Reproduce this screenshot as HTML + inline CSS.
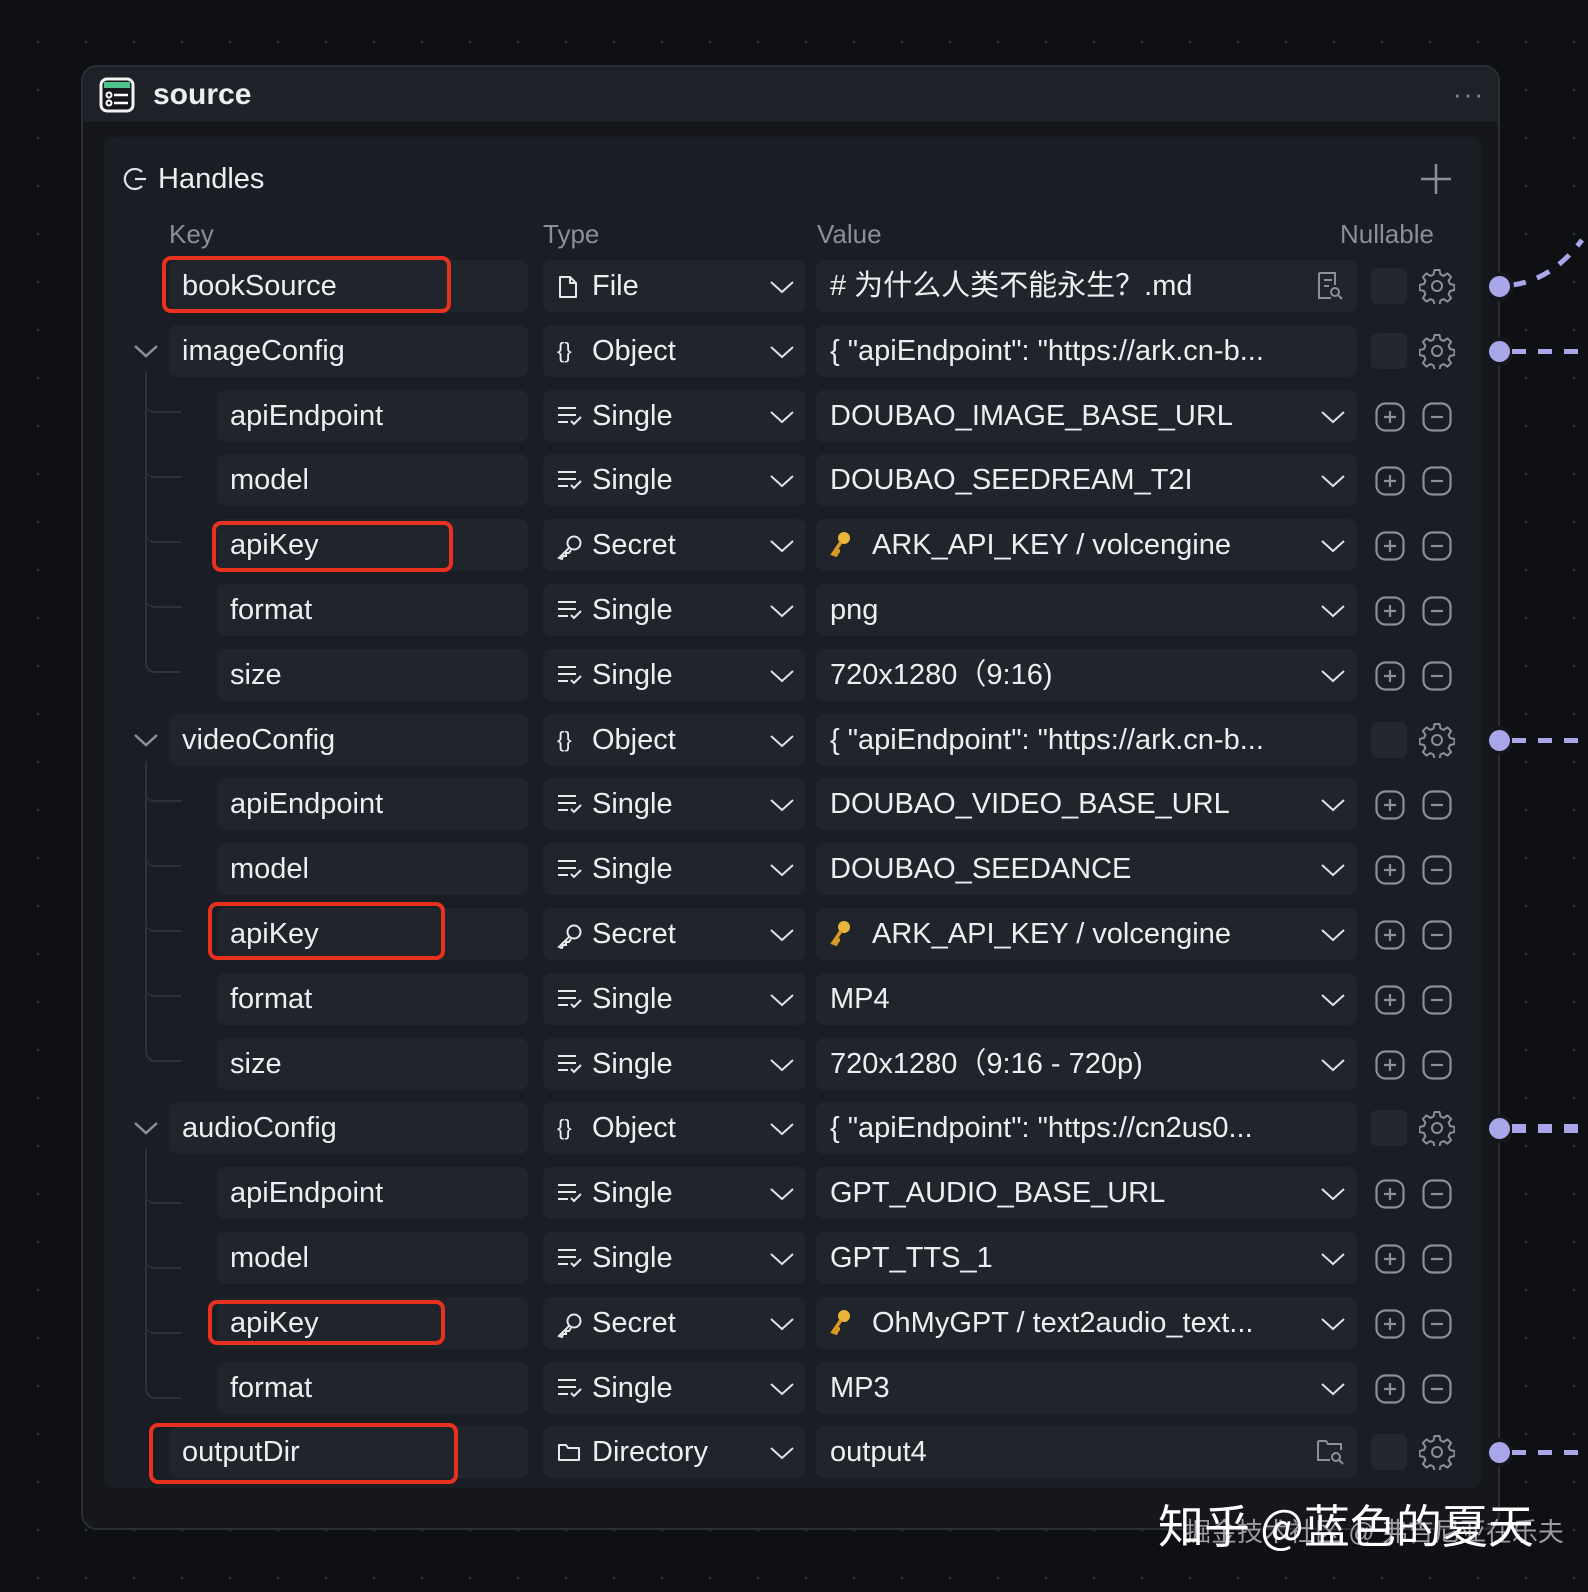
<!DOCTYPE html>
<html><head><meta charset="utf-8"><style>
*{margin:0;padding:0;box-sizing:border-box}
body{width:1588px;height:1592px;overflow:hidden;background:#0e1014;background-image:radial-gradient(circle,#2a2e36 1.2px,transparent 1.5px);background-size:48px 48px;background-position:14px 18px;font-family:"Liberation Sans","Noto Sans CJK SC",sans-serif;color:#eceef2;position:relative}
.node{position:absolute;left:81px;top:65px;width:1419px;height:1465px;background:#15171c;border:2px solid #2b2e35;border-radius:16px;overflow:hidden}
.hdr{position:absolute;left:0;top:0;right:0;height:55px;background:#1e2127}
.panel{position:absolute;left:21px;top:70px;width:1377px;height:1351px;background:#1a1d23;border-radius:10px}
.abs{position:absolute}
.row{position:absolute;left:0;width:1588px;height:52px}
.c{position:absolute;top:0;height:52px;background:#20242b;border-radius:8px;font-size:29px;line-height:52px;white-space:nowrap;overflow:hidden}
.k{padding-left:13px}
.k0{left:169px;width:359px}.k1{left:217px;width:311px}
.t{left:543px;width:263px;padding-left:49px}
.v{left:816px;width:541px;padding-left:14px}
.ti{position:absolute;left:14px;top:15px}
.ch{position:absolute;top:21px}
.t .ch{left:227px}.v .ch{left:505px}
.nb{position:absolute;left:1371px;top:8px;width:36px;height:36px;background:#23272e;border-radius:6px}
.g{position:absolute;left:1419px;top:8px}
.pm{position:absolute;top:12px}
.dot{position:absolute;left:1489px;top:16px;width:21px;height:21px;border-radius:50%;background:#a9a6ea;box-shadow:0 0 0 4px #15171c}
.dash{position:absolute;left:1512px;top:24px;width:76px;height:5px;background:repeating-linear-gradient(90deg,#a9a6ea 0 14px,transparent 14px 26px)}
.red{position:absolute;border:4px solid #e8321f;border-radius:9px}
.br{position:absolute;left:145px;width:36px;height:22px;border-left:2px solid #2e323a;border-bottom:2px solid #2e323a;border-bottom-left-radius:10px}
.arr{position:absolute;left:134px;top:20px}
</style></head><body>
<svg width="0" height="0" style="position:absolute"><defs>
<g id="gear"><path d="M15.5 2h5l1 4.5 3.2 1.4 3.9-2.5 3.5 3.5-2.5 3.9 1.4 3.2 4.5 1v5l-4.5 1-1.4 3.2 2.5 3.9-3.5 3.5-3.9-2.5-3.2 1.4-1 4.5h-5l-1-4.5-3.2-1.4-3.9 2.5-3.5-3.5 2.5-3.9-1.4-3.2-4.5-1v-5l4.5-1 1.4-3.2-2.5-3.9 3.5-3.5 3.9 2.5 3.2-1.4z" fill="none" stroke="#8a8f98" stroke-width="2" stroke-linejoin="round"/><circle cx="18" cy="18" r="5" fill="none" stroke="#8a8f98" stroke-width="2"/></g>
</defs></svg>
<svg class="abs" style="left:1512px;top:235px" width="76" height="60"><path d="M0 50 Q40 45 70 5" stroke="#a9a6ea" stroke-width="5" fill="none" stroke-dasharray="14 12"/></svg>
<div class="node">
<div class="hdr"></div>
<svg class="abs" style="left:16px;top:10px" width="36" height="36" viewBox="0 0 36 36"><rect x="2" y="2" width="32" height="32" rx="6" fill="#15171c" stroke="#f2f2f2" stroke-width="3"/><rect x="5" y="5" width="26" height="6" fill="#4cc38a"/><circle cx="10" cy="18" r="2.5" fill="none" stroke="#fff" stroke-width="2"/><path d="M15 18h14M15 26h14" stroke="#fff" stroke-width="2.5"/><circle cx="10" cy="26" r="2.5" fill="none" stroke="#fff" stroke-width="2"/></svg>
<div class="abs" style="left:70px;top:8px;font-size:30px;font-weight:bold;line-height:40px">source</div>
<div class="abs" style="left:1370px;top:12px;font-size:26px;color:#8a8f98;letter-spacing:2px">···</div>
<div class="panel"></div>
</div>
<svg class="abs" style="left:122px;top:166px" width="26" height="26"><path d="M20 6 A10 10 0 1 0 20 20" stroke="#dfe2e6" stroke-width="2.2" fill="none"/><path d="M13 13h11" stroke="#dfe2e6" stroke-width="2.2"/></svg>
<div class="abs" style="left:158px;top:160px;font-size:29px;line-height:38px">Handles</div>
<svg class="abs" style="left:1421px;top:164px" width="30" height="30"><path d="M15 0v30M0 15h30" stroke="#8a8f98" stroke-width="2.5"/></svg>
<div class="abs" style="top:219px;left:169px;font-size:26px;color:#8a8f98">Key</div>
<div class="abs" style="top:219px;left:543px;font-size:26px;color:#8a8f98">Type</div>
<div class="abs" style="top:219px;left:817px;font-size:26px;color:#8a8f98">Value</div>
<div class="abs" style="top:219px;left:1340px;font-size:26px;color:#8a8f98">Nullable</div>

<div class="br" style="top:372px;height:301px"></div>
<div class="br" style="top:372px;height:236px;border-left:none"></div><div class="br" style="top:372px;height:171px;border-left:none"></div><div class="br" style="top:372px;height:106px;border-left:none"></div><div class="br" style="top:372px;height:41px;border-left:none"></div>
<div class="br" style="top:761px;height:301px"></div>
<div class="br" style="top:761px;height:236px;border-left:none"></div><div class="br" style="top:761px;height:171px;border-left:none"></div><div class="br" style="top:761px;height:106px;border-left:none"></div><div class="br" style="top:761px;height:41px;border-left:none"></div>
<div class="br" style="top:1149px;height:250px"></div>
<div class="br" style="top:1149px;height:185px;border-left:none"></div><div class="br" style="top:1149px;height:120px;border-left:none"></div><div class="br" style="top:1149px;height:55px;border-left:none"></div>

<div class="row" style="top:260px">
<div class="c k k0">bookSource</div>
<div class="c t"><svg class="ti" width="22" height="24"><path d="M3 2h10l6 6v14H3z M13 2v6h6" stroke="#e6e8ec" stroke-width="2" fill="none" stroke-linejoin="round"/></svg>File<svg class="ch" width="24" height="13"><path d="M1 1l11 10 11-10" stroke="#dfe2e6" stroke-width="2" fill="none"/></svg></div>
<div class="c v"># 为什么人类不能永生？.md<svg class="abs" style="left:500px;top:11px" width="28" height="30"><path d="M3 2h16v12M3 2v25h12M8 9h8M8 15h5" stroke="#8a8f98" stroke-width="2" fill="none"/><circle cx="19" cy="21" r="4" stroke="#8a8f98" stroke-width="2" fill="none"/><path d="M22 24l4 4" stroke="#8a8f98" stroke-width="2"/></svg></div>
<div class="nb"></div><svg class="g" width="36" height="36"><use href="#gear"/></svg>
<div class="dot"></div></div>

<div class="row" style="top:325px">
<svg class="arr" width="24" height="13"><path d="M1 1l11 10 11-10" stroke="#8a8f98" stroke-width="2.5" fill="none"/></svg>
<div class="c k k0">imageConfig</div>
<div class="c t"><span class="ti" style="top:0;font-size:22px;line-height:52px">{}</span>Object<svg class="ch" width="24" height="13"><path d="M1 1l11 10 11-10" stroke="#dfe2e6" stroke-width="2" fill="none"/></svg></div>
<div class="c v">{ "apiEndpoint": "https://ark.cn-b...</div>
<div class="nb"></div><svg class="g" width="36" height="36"><use href="#gear"/></svg>
<div class="dot"></div><div class="dash"></div></div>

<div class="row" style="top:390px"><div class="c k k1">apiEndpoint</div><div class="c t"><svg class="ti" width="26" height="22"><path d="M1 3h18M1 10h18M1 17h10M14 16l3 3 7-7" stroke="#e6e8ec" stroke-width="2" fill="none"/></svg>Single<svg class="ch" width="24" height="13"><path d="M1 1l11 10 11-10" stroke="#dfe2e6" stroke-width="2" fill="none"/></svg></div><div class="c v">DOUBAO_IMAGE_BASE_URL<svg class="ch" width="24" height="13"><path d="M1 1l11 10 11-10" stroke="#dfe2e6" stroke-width="2" fill="none"/></svg></div><svg class="pm" style="left:1375px" width="30" height="30"><rect x="1.5" y="1.5" width="27" height="27" rx="9" fill="none" stroke="#8a8f98" stroke-width="2.2"/><path d="M15 9v12M9 15h12" stroke="#8a8f98" stroke-width="2.2"/></svg><svg class="pm" style="left:1422px" width="30" height="30"><rect x="1.5" y="1.5" width="27" height="27" rx="9" fill="none" stroke="#8a8f98" stroke-width="2.2"/><path d="M9 15h12" stroke="#8a8f98" stroke-width="2.2"/></svg></div>

<div class="row" style="top:454px"><div class="c k k1">model</div><div class="c t"><svg class="ti" width="26" height="22"><path d="M1 3h18M1 10h18M1 17h10M14 16l3 3 7-7" stroke="#e6e8ec" stroke-width="2" fill="none"/></svg>Single<svg class="ch" width="24" height="13"><path d="M1 1l11 10 11-10" stroke="#dfe2e6" stroke-width="2" fill="none"/></svg></div><div class="c v">DOUBAO_SEEDREAM_T2I<svg class="ch" width="24" height="13"><path d="M1 1l11 10 11-10" stroke="#dfe2e6" stroke-width="2" fill="none"/></svg></div><svg class="pm" style="left:1375px" width="30" height="30"><rect x="1.5" y="1.5" width="27" height="27" rx="9" fill="none" stroke="#8a8f98" stroke-width="2.2"/><path d="M15 9v12M9 15h12" stroke="#8a8f98" stroke-width="2.2"/></svg><svg class="pm" style="left:1422px" width="30" height="30"><rect x="1.5" y="1.5" width="27" height="27" rx="9" fill="none" stroke="#8a8f98" stroke-width="2.2"/><path d="M9 15h12" stroke="#8a8f98" stroke-width="2.2"/></svg></div>

<div class="row" style="top:519px"><div class="c k k1">apiKey</div><div class="c t"><svg class="ti" width="26" height="26"><circle cx="17" cy="9" r="6.5" fill="none" stroke="#e6e8ec" stroke-width="2"/><path d="M12 14L2 24l3 1 1-3 3 0 0-3 3 0 2-3" stroke="#e6e8ec" stroke-width="2" fill="none"/></svg>Secret<svg class="ch" width="24" height="13"><path d="M1 1l11 10 11-10" stroke="#dfe2e6" stroke-width="2" fill="none"/></svg></div><div class="c v" style="padding-left:56px"><svg class="abs" style="left:14px;top:12px" width="22" height="26"><circle cx="14" cy="7" r="6" fill="#e9b53a"/><path d="M11 11L3 23l3 1 2-4 2 0" stroke="#d89a25" stroke-width="3.5" fill="none"/></svg>ARK_API_KEY / volcengine<svg class="ch" width="24" height="13"><path d="M1 1l11 10 11-10" stroke="#dfe2e6" stroke-width="2" fill="none"/></svg></div><svg class="pm" style="left:1375px" width="30" height="30"><rect x="1.5" y="1.5" width="27" height="27" rx="9" fill="none" stroke="#8a8f98" stroke-width="2.2"/><path d="M15 9v12M9 15h12" stroke="#8a8f98" stroke-width="2.2"/></svg><svg class="pm" style="left:1422px" width="30" height="30"><rect x="1.5" y="1.5" width="27" height="27" rx="9" fill="none" stroke="#8a8f98" stroke-width="2.2"/><path d="M9 15h12" stroke="#8a8f98" stroke-width="2.2"/></svg></div>

<div class="row" style="top:584px"><div class="c k k1">format</div><div class="c t"><svg class="ti" width="26" height="22"><path d="M1 3h18M1 10h18M1 17h10M14 16l3 3 7-7" stroke="#e6e8ec" stroke-width="2" fill="none"/></svg>Single<svg class="ch" width="24" height="13"><path d="M1 1l11 10 11-10" stroke="#dfe2e6" stroke-width="2" fill="none"/></svg></div><div class="c v">png<svg class="ch" width="24" height="13"><path d="M1 1l11 10 11-10" stroke="#dfe2e6" stroke-width="2" fill="none"/></svg></div><svg class="pm" style="left:1375px" width="30" height="30"><rect x="1.5" y="1.5" width="27" height="27" rx="9" fill="none" stroke="#8a8f98" stroke-width="2.2"/><path d="M15 9v12M9 15h12" stroke="#8a8f98" stroke-width="2.2"/></svg><svg class="pm" style="left:1422px" width="30" height="30"><rect x="1.5" y="1.5" width="27" height="27" rx="9" fill="none" stroke="#8a8f98" stroke-width="2.2"/><path d="M9 15h12" stroke="#8a8f98" stroke-width="2.2"/></svg></div>

<div class="row" style="top:649px"><div class="c k k1">size</div><div class="c t"><svg class="ti" width="26" height="22"><path d="M1 3h18M1 10h18M1 17h10M14 16l3 3 7-7" stroke="#e6e8ec" stroke-width="2" fill="none"/></svg>Single<svg class="ch" width="24" height="13"><path d="M1 1l11 10 11-10" stroke="#dfe2e6" stroke-width="2" fill="none"/></svg></div><div class="c v">720x1280（9:16)<svg class="ch" width="24" height="13"><path d="M1 1l11 10 11-10" stroke="#dfe2e6" stroke-width="2" fill="none"/></svg></div><svg class="pm" style="left:1375px" width="30" height="30"><rect x="1.5" y="1.5" width="27" height="27" rx="9" fill="none" stroke="#8a8f98" stroke-width="2.2"/><path d="M15 9v12M9 15h12" stroke="#8a8f98" stroke-width="2.2"/></svg><svg class="pm" style="left:1422px" width="30" height="30"><rect x="1.5" y="1.5" width="27" height="27" rx="9" fill="none" stroke="#8a8f98" stroke-width="2.2"/><path d="M9 15h12" stroke="#8a8f98" stroke-width="2.2"/></svg></div>

<div class="row" style="top:714px">
<svg class="arr" width="24" height="13"><path d="M1 1l11 10 11-10" stroke="#8a8f98" stroke-width="2.5" fill="none"/></svg>
<div class="c k k0">videoConfig</div>
<div class="c t"><span class="ti" style="top:0;font-size:22px;line-height:52px">{}</span>Object<svg class="ch" width="24" height="13"><path d="M1 1l11 10 11-10" stroke="#dfe2e6" stroke-width="2" fill="none"/></svg></div>
<div class="c v">{ "apiEndpoint": "https://ark.cn-b...</div>
<div class="nb"></div><svg class="g" width="36" height="36"><use href="#gear"/></svg>
<div class="dot"></div><div class="dash"></div></div>

<div class="row" style="top:778px"><div class="c k k1">apiEndpoint</div><div class="c t"><svg class="ti" width="26" height="22"><path d="M1 3h18M1 10h18M1 17h10M14 16l3 3 7-7" stroke="#e6e8ec" stroke-width="2" fill="none"/></svg>Single<svg class="ch" width="24" height="13"><path d="M1 1l11 10 11-10" stroke="#dfe2e6" stroke-width="2" fill="none"/></svg></div><div class="c v">DOUBAO_VIDEO_BASE_URL<svg class="ch" width="24" height="13"><path d="M1 1l11 10 11-10" stroke="#dfe2e6" stroke-width="2" fill="none"/></svg></div><svg class="pm" style="left:1375px" width="30" height="30"><rect x="1.5" y="1.5" width="27" height="27" rx="9" fill="none" stroke="#8a8f98" stroke-width="2.2"/><path d="M15 9v12M9 15h12" stroke="#8a8f98" stroke-width="2.2"/></svg><svg class="pm" style="left:1422px" width="30" height="30"><rect x="1.5" y="1.5" width="27" height="27" rx="9" fill="none" stroke="#8a8f98" stroke-width="2.2"/><path d="M9 15h12" stroke="#8a8f98" stroke-width="2.2"/></svg></div>

<div class="row" style="top:843px"><div class="c k k1">model</div><div class="c t"><svg class="ti" width="26" height="22"><path d="M1 3h18M1 10h18M1 17h10M14 16l3 3 7-7" stroke="#e6e8ec" stroke-width="2" fill="none"/></svg>Single<svg class="ch" width="24" height="13"><path d="M1 1l11 10 11-10" stroke="#dfe2e6" stroke-width="2" fill="none"/></svg></div><div class="c v">DOUBAO_SEEDANCE<svg class="ch" width="24" height="13"><path d="M1 1l11 10 11-10" stroke="#dfe2e6" stroke-width="2" fill="none"/></svg></div><svg class="pm" style="left:1375px" width="30" height="30"><rect x="1.5" y="1.5" width="27" height="27" rx="9" fill="none" stroke="#8a8f98" stroke-width="2.2"/><path d="M15 9v12M9 15h12" stroke="#8a8f98" stroke-width="2.2"/></svg><svg class="pm" style="left:1422px" width="30" height="30"><rect x="1.5" y="1.5" width="27" height="27" rx="9" fill="none" stroke="#8a8f98" stroke-width="2.2"/><path d="M9 15h12" stroke="#8a8f98" stroke-width="2.2"/></svg></div>

<div class="row" style="top:908px"><div class="c k k1">apiKey</div><div class="c t"><svg class="ti" width="26" height="26"><circle cx="17" cy="9" r="6.5" fill="none" stroke="#e6e8ec" stroke-width="2"/><path d="M12 14L2 24l3 1 1-3 3 0 0-3 3 0 2-3" stroke="#e6e8ec" stroke-width="2" fill="none"/></svg>Secret<svg class="ch" width="24" height="13"><path d="M1 1l11 10 11-10" stroke="#dfe2e6" stroke-width="2" fill="none"/></svg></div><div class="c v" style="padding-left:56px"><svg class="abs" style="left:14px;top:12px" width="22" height="26"><circle cx="14" cy="7" r="6" fill="#e9b53a"/><path d="M11 11L3 23l3 1 2-4 2 0" stroke="#d89a25" stroke-width="3.5" fill="none"/></svg>ARK_API_KEY / volcengine<svg class="ch" width="24" height="13"><path d="M1 1l11 10 11-10" stroke="#dfe2e6" stroke-width="2" fill="none"/></svg></div><svg class="pm" style="left:1375px" width="30" height="30"><rect x="1.5" y="1.5" width="27" height="27" rx="9" fill="none" stroke="#8a8f98" stroke-width="2.2"/><path d="M15 9v12M9 15h12" stroke="#8a8f98" stroke-width="2.2"/></svg><svg class="pm" style="left:1422px" width="30" height="30"><rect x="1.5" y="1.5" width="27" height="27" rx="9" fill="none" stroke="#8a8f98" stroke-width="2.2"/><path d="M9 15h12" stroke="#8a8f98" stroke-width="2.2"/></svg></div>

<div class="row" style="top:973px"><div class="c k k1">format</div><div class="c t"><svg class="ti" width="26" height="22"><path d="M1 3h18M1 10h18M1 17h10M14 16l3 3 7-7" stroke="#e6e8ec" stroke-width="2" fill="none"/></svg>Single<svg class="ch" width="24" height="13"><path d="M1 1l11 10 11-10" stroke="#dfe2e6" stroke-width="2" fill="none"/></svg></div><div class="c v">MP4<svg class="ch" width="24" height="13"><path d="M1 1l11 10 11-10" stroke="#dfe2e6" stroke-width="2" fill="none"/></svg></div><svg class="pm" style="left:1375px" width="30" height="30"><rect x="1.5" y="1.5" width="27" height="27" rx="9" fill="none" stroke="#8a8f98" stroke-width="2.2"/><path d="M15 9v12M9 15h12" stroke="#8a8f98" stroke-width="2.2"/></svg><svg class="pm" style="left:1422px" width="30" height="30"><rect x="1.5" y="1.5" width="27" height="27" rx="9" fill="none" stroke="#8a8f98" stroke-width="2.2"/><path d="M9 15h12" stroke="#8a8f98" stroke-width="2.2"/></svg></div>

<div class="row" style="top:1038px"><div class="c k k1">size</div><div class="c t"><svg class="ti" width="26" height="22"><path d="M1 3h18M1 10h18M1 17h10M14 16l3 3 7-7" stroke="#e6e8ec" stroke-width="2" fill="none"/></svg>Single<svg class="ch" width="24" height="13"><path d="M1 1l11 10 11-10" stroke="#dfe2e6" stroke-width="2" fill="none"/></svg></div><div class="c v">720x1280（9:16 - 720p)<svg class="ch" width="24" height="13"><path d="M1 1l11 10 11-10" stroke="#dfe2e6" stroke-width="2" fill="none"/></svg></div><svg class="pm" style="left:1375px" width="30" height="30"><rect x="1.5" y="1.5" width="27" height="27" rx="9" fill="none" stroke="#8a8f98" stroke-width="2.2"/><path d="M15 9v12M9 15h12" stroke="#8a8f98" stroke-width="2.2"/></svg><svg class="pm" style="left:1422px" width="30" height="30"><rect x="1.5" y="1.5" width="27" height="27" rx="9" fill="none" stroke="#8a8f98" stroke-width="2.2"/><path d="M9 15h12" stroke="#8a8f98" stroke-width="2.2"/></svg></div>

<div class="row" style="top:1102px">
<svg class="arr" width="24" height="13"><path d="M1 1l11 10 11-10" stroke="#8a8f98" stroke-width="2.5" fill="none"/></svg>
<div class="c k k0">audioConfig</div>
<div class="c t"><span class="ti" style="top:0;font-size:22px;line-height:52px">{}</span>Object<svg class="ch" width="24" height="13"><path d="M1 1l11 10 11-10" stroke="#dfe2e6" stroke-width="2" fill="none"/></svg></div>
<div class="c v">{ "apiEndpoint": "https://cn2us0...</div>
<div class="nb"></div><svg class="g" width="36" height="36"><use href="#gear"/></svg>
<div class="dot"></div><div class="dash" style="height:9px;top:22px"></div></div>

<div class="row" style="top:1167px"><div class="c k k1">apiEndpoint</div><div class="c t"><svg class="ti" width="26" height="22"><path d="M1 3h18M1 10h18M1 17h10M14 16l3 3 7-7" stroke="#e6e8ec" stroke-width="2" fill="none"/></svg>Single<svg class="ch" width="24" height="13"><path d="M1 1l11 10 11-10" stroke="#dfe2e6" stroke-width="2" fill="none"/></svg></div><div class="c v">GPT_AUDIO_BASE_URL<svg class="ch" width="24" height="13"><path d="M1 1l11 10 11-10" stroke="#dfe2e6" stroke-width="2" fill="none"/></svg></div><svg class="pm" style="left:1375px" width="30" height="30"><rect x="1.5" y="1.5" width="27" height="27" rx="9" fill="none" stroke="#8a8f98" stroke-width="2.2"/><path d="M15 9v12M9 15h12" stroke="#8a8f98" stroke-width="2.2"/></svg><svg class="pm" style="left:1422px" width="30" height="30"><rect x="1.5" y="1.5" width="27" height="27" rx="9" fill="none" stroke="#8a8f98" stroke-width="2.2"/><path d="M9 15h12" stroke="#8a8f98" stroke-width="2.2"/></svg></div>

<div class="row" style="top:1232px"><div class="c k k1">model</div><div class="c t"><svg class="ti" width="26" height="22"><path d="M1 3h18M1 10h18M1 17h10M14 16l3 3 7-7" stroke="#e6e8ec" stroke-width="2" fill="none"/></svg>Single<svg class="ch" width="24" height="13"><path d="M1 1l11 10 11-10" stroke="#dfe2e6" stroke-width="2" fill="none"/></svg></div><div class="c v">GPT_TTS_1<svg class="ch" width="24" height="13"><path d="M1 1l11 10 11-10" stroke="#dfe2e6" stroke-width="2" fill="none"/></svg></div><svg class="pm" style="left:1375px" width="30" height="30"><rect x="1.5" y="1.5" width="27" height="27" rx="9" fill="none" stroke="#8a8f98" stroke-width="2.2"/><path d="M15 9v12M9 15h12" stroke="#8a8f98" stroke-width="2.2"/></svg><svg class="pm" style="left:1422px" width="30" height="30"><rect x="1.5" y="1.5" width="27" height="27" rx="9" fill="none" stroke="#8a8f98" stroke-width="2.2"/><path d="M9 15h12" stroke="#8a8f98" stroke-width="2.2"/></svg></div>

<div class="row" style="top:1297px"><div class="c k k1">apiKey</div><div class="c t"><svg class="ti" width="26" height="26"><circle cx="17" cy="9" r="6.5" fill="none" stroke="#e6e8ec" stroke-width="2"/><path d="M12 14L2 24l3 1 1-3 3 0 0-3 3 0 2-3" stroke="#e6e8ec" stroke-width="2" fill="none"/></svg>Secret<svg class="ch" width="24" height="13"><path d="M1 1l11 10 11-10" stroke="#dfe2e6" stroke-width="2" fill="none"/></svg></div><div class="c v" style="padding-left:56px"><svg class="abs" style="left:14px;top:12px" width="22" height="26"><circle cx="14" cy="7" r="6" fill="#e9b53a"/><path d="M11 11L3 23l3 1 2-4 2 0" stroke="#d89a25" stroke-width="3.5" fill="none"/></svg>OhMyGPT / text2audio_text...<svg class="ch" width="24" height="13"><path d="M1 1l11 10 11-10" stroke="#dfe2e6" stroke-width="2" fill="none"/></svg></div><svg class="pm" style="left:1375px" width="30" height="30"><rect x="1.5" y="1.5" width="27" height="27" rx="9" fill="none" stroke="#8a8f98" stroke-width="2.2"/><path d="M15 9v12M9 15h12" stroke="#8a8f98" stroke-width="2.2"/></svg><svg class="pm" style="left:1422px" width="30" height="30"><rect x="1.5" y="1.5" width="27" height="27" rx="9" fill="none" stroke="#8a8f98" stroke-width="2.2"/><path d="M9 15h12" stroke="#8a8f98" stroke-width="2.2"/></svg></div>

<div class="row" style="top:1362px"><div class="c k k1">format</div><div class="c t"><svg class="ti" width="26" height="22"><path d="M1 3h18M1 10h18M1 17h10M14 16l3 3 7-7" stroke="#e6e8ec" stroke-width="2" fill="none"/></svg>Single<svg class="ch" width="24" height="13"><path d="M1 1l11 10 11-10" stroke="#dfe2e6" stroke-width="2" fill="none"/></svg></div><div class="c v">MP3<svg class="ch" width="24" height="13"><path d="M1 1l11 10 11-10" stroke="#dfe2e6" stroke-width="2" fill="none"/></svg></div><svg class="pm" style="left:1375px" width="30" height="30"><rect x="1.5" y="1.5" width="27" height="27" rx="9" fill="none" stroke="#8a8f98" stroke-width="2.2"/><path d="M15 9v12M9 15h12" stroke="#8a8f98" stroke-width="2.2"/></svg><svg class="pm" style="left:1422px" width="30" height="30"><rect x="1.5" y="1.5" width="27" height="27" rx="9" fill="none" stroke="#8a8f98" stroke-width="2.2"/><path d="M9 15h12" stroke="#8a8f98" stroke-width="2.2"/></svg></div>

<div class="row" style="top:1426px">
<div class="c k k0">outputDir</div>
<div class="c t"><svg class="ti" width="24" height="22"><path d="M2 4h7l2 3h11v12H2z" stroke="#e6e8ec" stroke-width="2" fill="none" stroke-linejoin="round"/></svg>Directory<svg class="ch" width="24" height="13"><path d="M1 1l11 10 11-10" stroke="#dfe2e6" stroke-width="2" fill="none"/></svg></div>
<div class="c v">output4<svg class="abs" style="left:500px;top:12px" width="30" height="28"><path d="M2 3h8l2 3h13v6M2 3v19h12" stroke="#8a8f98" stroke-width="2" fill="none"/><circle cx="20" cy="19" r="4" stroke="#8a8f98" stroke-width="2" fill="none"/><path d="M23 22l4 4" stroke="#8a8f98" stroke-width="2"/></svg></div>
<div class="nb"></div><svg class="g" width="36" height="36"><use href="#gear"/></svg>
<div class="dot"></div><div class="dash"></div></div>

<div class="red" style="left:162px;top:256px;width:289px;height:57px"></div>
<div class="red" style="left:212px;top:521px;width:241px;height:51px"></div>
<div class="red" style="left:208px;top:902px;width:237px;height:58px"></div>
<div class="red" style="left:208px;top:1300px;width:237px;height:45px"></div>
<div class="red" style="left:149px;top:1423px;width:309px;height:61px"></div>

<div class="abs" style="left:1185px;top:1512px;font-size:26px;color:#9a9ca2">掘金技术社区 @ 弗吉尼亚在乐夫</div>
<div class="abs" style="left:1158px;top:1496px;font-size:46px;color:#fff;line-height:56px;font-family:'Noto Sans CJK SC',sans-serif">知乎 @蓝色的夏天</div>
</body></html>
